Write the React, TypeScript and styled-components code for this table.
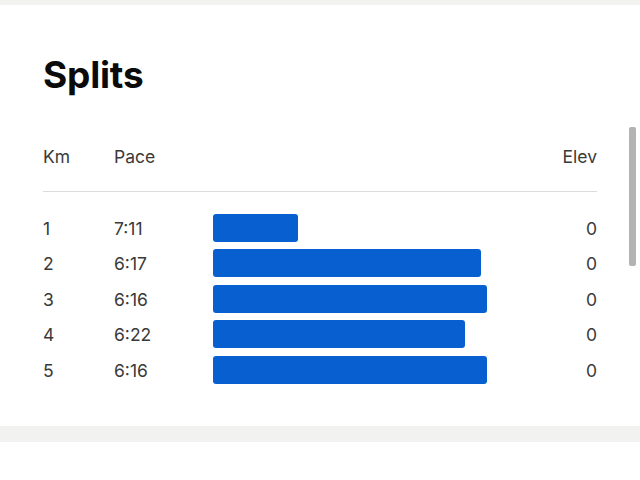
import React from "react";
import styled, { createGlobalStyle } from "styled-components";

const Global = createGlobalStyle`
  html, body { margin: 0; padding: 0; background: #fff; }
  body { font-family: Inter, "Noto Sans", "Liberation Sans", sans-serif; color: #333; }
`;

const Page = styled.div`
  position: relative;
  width: 640px;
  height: 480px;
  overflow: hidden;
  display: flex;
  flex-direction: column;
`;

const Band = styled.div<{ $h: number }>`
  height: ${(p) => p.$h}px;
  background: #f2f2f0;
  flex: none;
`;

const Section = styled.section`
  padding: 47px 43px 38px;
  background: #fff;
`;

const Title = styled.h2`
  margin: 0 0 40px;
  font-size: 37px;
  line-height: 46px;
  font-weight: 700;
  color: #0b0b0b;
  letter-spacing: -0.2px;
`;

const Grid = styled.div`
  display: grid;
  grid-template-columns: 71px 99px 1fr auto;
  align-items: center;
`;

const HeaderRow = styled(Grid)`
  height: 36px;
  padding-bottom: 17px;
  border-bottom: 1px solid #dcdcdc;
  margin-bottom: 18px;
`;

const Cell = styled.div<{ $right?: boolean }>`
  font-size: 17.5px;
  line-height: 24px;
  padding-top: 2px;
  color: #3a3a3a;
  text-align: ${(p) => (p.$right ? "right" : "left")};
`;

const Row = styled(Grid)`
  height: 35.5px;
`;

const BarTrack = styled.div`
  padding-right: 20px;
`;

const Bar = styled.div`
  height: 28px;
  background: #075fd0;
  border-radius: 3px;
`;

const Thumb = styled.div`
  position: absolute;
  right: 4px;
  top: 127px;
  width: 7px;
  height: 139px;
  border-radius: 2px;
  background: #b3b3b3;
`;

const splits = [
  { km: 1, pace: "7:11", w: 85, elev: 0 },
  { km: 2, pace: "6:17", w: 268, elev: 0 },
  { km: 3, pace: "6:16", w: 274, elev: 0 },
  { km: 4, pace: "6:22", w: 252, elev: 0 },
  { km: 5, pace: "6:16", w: 274, elev: 0 },
];

export default function App() {
  return (
    <Page>
      <Global />
      <Band $h={5} />
      <Section>
        <Title>Splits</Title>
        <HeaderRow>
          <Cell>Km</Cell>
          <Cell>Pace</Cell>
          <div />
          <Cell $right>Elev</Cell>
        </HeaderRow>
        {splits.map((s) => (
          <Row key={s.km}>
            <Cell>{s.km}</Cell>
            <Cell>{s.pace}</Cell>
            <BarTrack>
              <Bar style={{ width: `${s.w}px` }} />
            </BarTrack>
            <Cell $right>{s.elev}</Cell>
          </Row>
        ))}
      </Section>
      <Band $h={16} />
      <Thumb />
    </Page>
  );
}
